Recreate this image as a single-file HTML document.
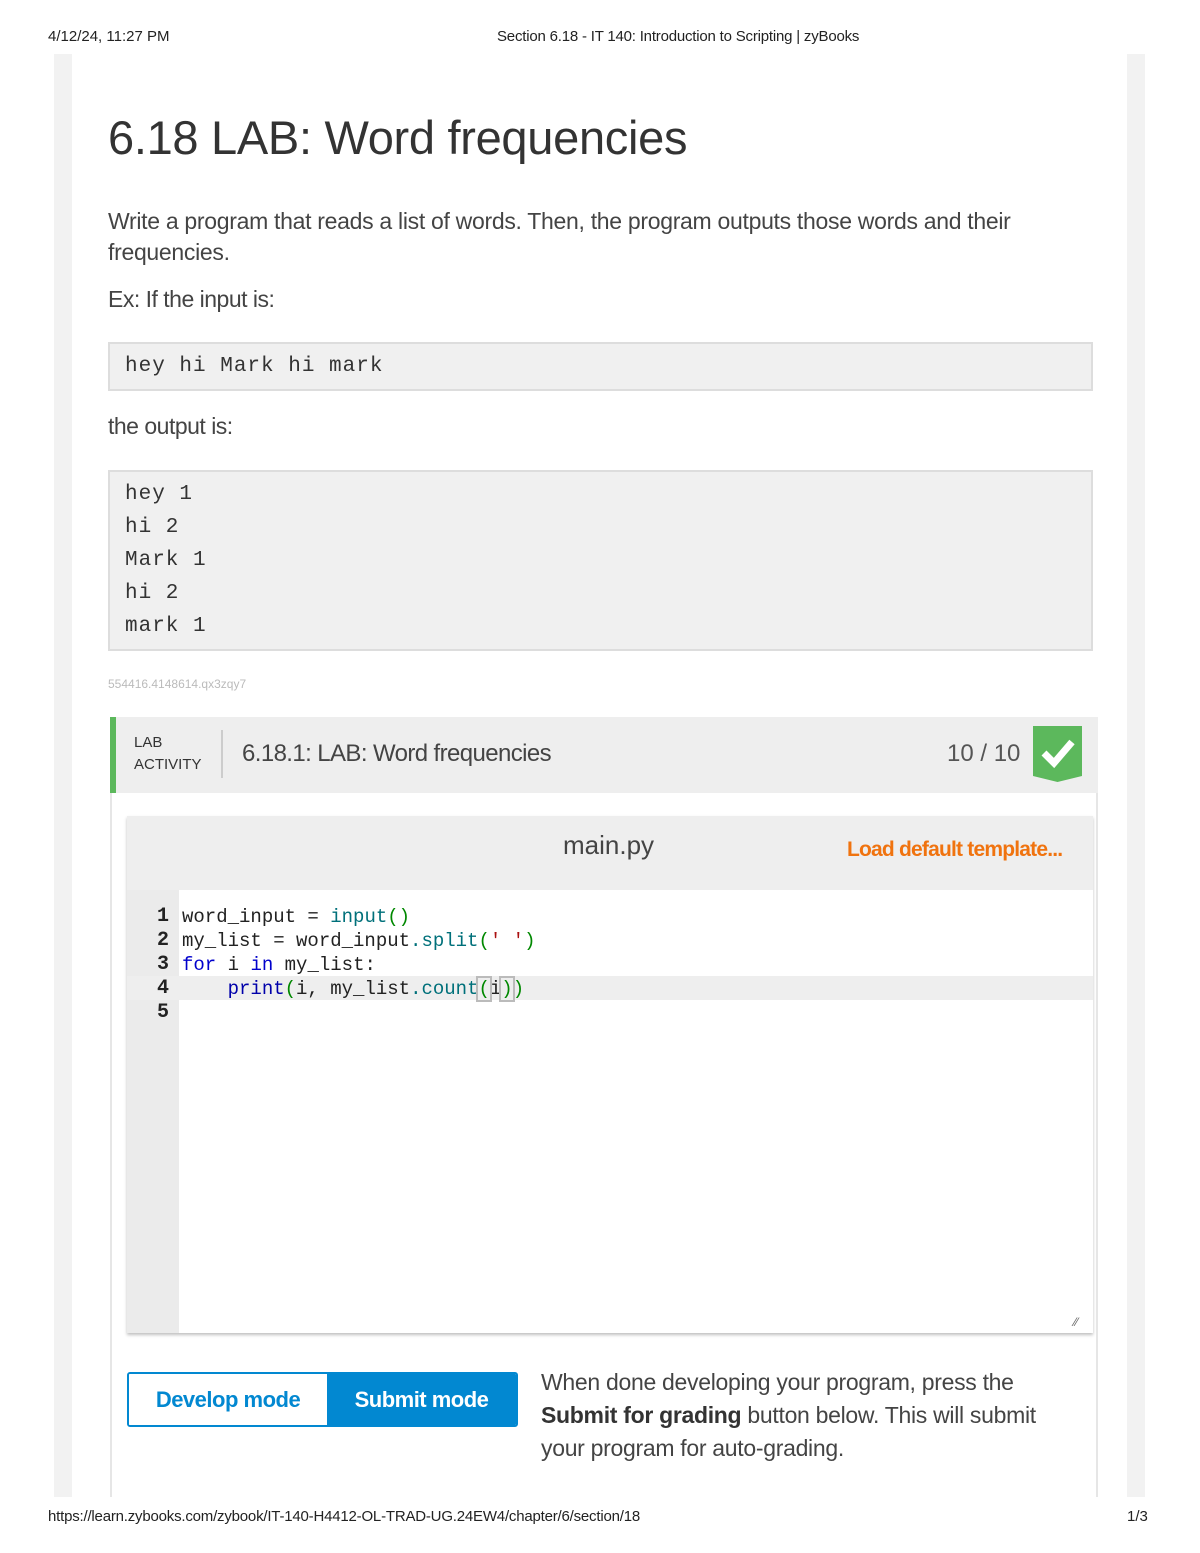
<!DOCTYPE html>
<html><head><meta charset="utf-8"><style>
*{margin:0;padding:0;box-sizing:border-box}
body{width:1200px;height:1553px;background:#fff;position:relative;font-family:"Liberation Sans",sans-serif;color:#333;overflow:hidden}
.a{position:absolute}
.mono{font-family:"Liberation Mono",monospace}
.pre{background:#f0f0f0;border:2px solid #ddd;font-size:21px;color:#333;padding-left:15px;letter-spacing:1px}
.code div{height:24px;line-height:24px}
</style></head><body>
<div class="a" style="left:48px;top:28px;font-size:15px;color:#222">4/12/24, 11:27 PM</div>
<div class="a" style="left:497px;top:28px;font-size:15px;color:#222;letter-spacing:-0.2px">Section 6.18 - IT 140: Introduction to Scripting | zyBooks</div>
<div class="a" style="left:54px;top:54px;width:18px;height:1443px;background:#f2f2f2"></div>
<div class="a" style="left:1127px;top:54px;width:18px;height:1443px;background:#f2f2f2"></div>

<div class="a" style="left:108px;top:110px;font-size:47px;color:#333;letter-spacing:-0.3px">6.18 LAB: Word frequencies</div>
<div class="a" style="left:108px;top:206px;width:960px;font-size:23px;line-height:31px;color:#444;letter-spacing:-0.3px">Write a program that reads a list of words. Then, the program outputs those words and their frequencies.</div>
<div class="a" style="left:108px;top:286px;font-size:23px;color:#444;letter-spacing:-0.5px">Ex: If the input is:</div>
<div class="a pre mono" style="left:108px;top:342px;width:985px;height:49px;line-height:45px">hey hi Mark hi mark</div>
<div class="a" style="left:108px;top:413px;font-size:23px;color:#444;letter-spacing:-0.5px">the output is:</div>
<div class="a pre mono" style="left:108px;top:470px;width:985px;height:181px;padding-top:6px;line-height:33px">hey 1<br>hi 2<br>Mark 1<br>hi 2<br>mark 1</div>
<div class="a" style="left:108px;top:677px;font-size:12px;color:#bbb">554416.4148614.qx3zqy7</div>

<div class="a" style="left:110px;top:717px;width:988px;height:780px;border-left:2px solid #e6e6e6;border-right:2px solid #e6e6e6"></div>
<div class="a" style="left:110px;top:717px;width:988px;height:76px;background:#eee;border-left:6px solid #5cb85c"></div>
<div class="a" style="left:134px;top:732px;font-size:15px;line-height:22px;color:#333">LAB<br>ACTIVITY</div>
<div class="a" style="left:221px;top:730px;width:2px;height:48px;background:#ccc"></div>
<div class="a" style="left:242px;top:740px;font-size:24px;color:#444;letter-spacing:-0.6px">6.18.1: LAB: Word frequencies</div>
<div class="a" style="left:947px;top:740px;font-size:24px;color:#555">10 / 10</div>
<svg class="a" style="left:1033px;top:726px" width="49" height="56" viewBox="0 0 49 56"><path d="M0 0H49V50L24.5 56L0 50Z" fill="#5cb85c"/><path d="M11 27L21 37L39 16" stroke="#fff" stroke-width="7" fill="none"/></svg>

<div class="a" style="left:127px;top:816px;width:966px;height:517px;background:#fff;box-shadow:0 2px 3px rgba(0,0,0,.25)"></div>
<div class="a" style="left:127px;top:816px;width:966px;height:74px;background:#eee"></div>
<div class="a" style="left:563px;top:830px;font-size:26px;color:#444">main.py</div>
<div class="a" style="left:847px;top:838px;font-size:21px;color:#f0730f;font-weight:bold;letter-spacing:-0.8px">Load default template...</div>
<div class="a" style="left:127px;top:890px;width:52px;height:443px;background:#ebebeb"></div>
<div class="a" style="left:127px;top:976px;width:966px;height:24px;background:#eee"></div>
<div class="a mono code" style="left:157px;top:905px;font-size:20px;color:#222;font-weight:bold"><div>1</div><div>2</div><div>3</div><div>4</div><div>5</div></div>
<div class="a mono code" style="left:182px;top:905px;font-size:19px;color:#222;white-space:pre"><div>word_input = <span style="color:#00707a">input</span><span style="color:#080">()</span></div><div>my_list = word_input<span style="color:#00707a">.split</span><span style="color:#080">(</span><span style="color:#a11">' '</span><span style="color:#080">)</span></div><div><span style="color:#00c">for</span> i <span style="color:#00c">in</span> my_list:</div><div>    <span style="color:#00a">print</span><span style="color:#080">(</span>i, my_list<span style="color:#00707a">.count</span><span style="color:#080;outline:2px solid #bbb">(</span>i<span style="color:#080;outline:2px solid #bbb">)</span><span style="color:#080">)</span></div></div>
<div class="a" style="left:1074px;top:1315px;font-size:12px;color:#666">⁄⁄</div>

<div class="a" style="left:127px;top:1372px;width:391px;height:55px;border:2px solid #0288d1;border-radius:3px;overflow:hidden;display:flex">
<div style="width:198px;background:#fff;color:#0288d1;font-weight:bold;font-size:22px;text-align:center;line-height:51px;letter-spacing:-.5px">Develop mode</div>
<div style="flex:1;background:#0288d1;color:#fff;font-weight:bold;font-size:22px;text-align:center;line-height:51px;letter-spacing:-.5px">Submit mode</div></div>
<div class="a" style="left:541px;top:1366px;width:530px;font-size:23px;line-height:33px;color:#444;letter-spacing:-.3px">When done developing your program, press the <b style="color:#333">Submit for grading</b> button below. This will submit your program for auto-grading.</div>

<div class="a" style="left:48px;top:1508px;font-size:15px;color:#222;letter-spacing:-0.2px">https://learn.zybooks.com/zybook/IT-140-H4412-OL-TRAD-UG.24EW4/chapter/6/section/18</div>
<div class="a" style="left:1127px;top:1508px;font-size:15px;color:#222">1/3</div>
</body></html>
